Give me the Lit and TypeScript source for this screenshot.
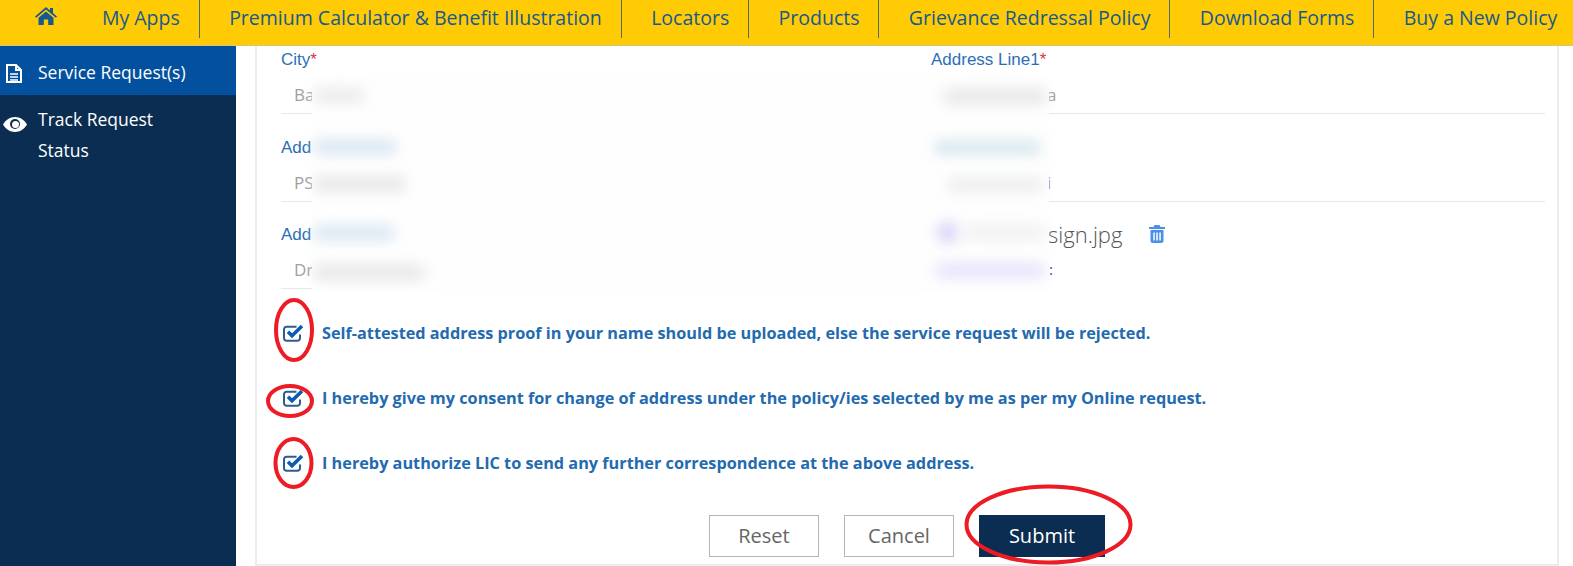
import { css, html, LitElement, svg } from 'lit';
import { customElement } from 'lit/decorators.js';

const NAV = ['My Apps', 'Premium Calculator & Benefit Illustration', 'Locators', 'Products', 'Grievance Redressal Policy', 'Download Forms', 'Buy a New Policy'];

const CHECKS = [
  'Self-attested address proof in your name should be uploaded, else the service request will be rejected.',
  'I hereby give my consent for change of address under the policy/ies selected by me as per my Online request.',
  'I hereby authorize LIC to send any further correspondence at the above address.',
];

// smudges inside the white redaction patch: x, y, w, h, colour (page coords)
const BLOBS: [number, number, number, number, string][] = [
  [314, 140, 82, 14, '#d6e5f2'],
  [314, 177, 92, 14, '#e6e6e6'],
  [314, 226, 80, 14, '#d6e5f2'],
  [314, 265, 110, 15, '#e6e6e6'],
  [314, 89, 50, 13, '#e8e8e8'],
  [944, 89, 102, 15, '#e6e6e6'],
  [935, 141, 105, 13, '#d2e5ec'],
  [948, 178, 94, 14, '#ececec'],
  [938, 223, 19, 19, '#d6d2f7'],
  [964, 225, 80, 15, '#f0f0f0'],
  [936, 264, 108, 13, '#e2dffa'],
];

// red hand-drawn annotation rings: cx, cy, rx, ry
const RINGS: [number, number, number, number][] = [
  [294, 330, 18, 30],
  [290, 401, 22, 15],
  [293.5, 463, 18, 24],
  [1048.5, 524.5, 82, 38],
];

@customElement('app-root')
export class AppRoot extends LitElement {
  static override styles = css`
    :host {
      display: block;
      position: relative;
      width: 1573px;
      height: 566px;
      overflow: hidden;
      background: #fff;
      font-family: 'Open Sans', sans-serif;
    }
    .topbar {
      display: flex;
      height: 45px;
      background: #ffcb05;
      border-bottom: 1px solid #d8c67a;
      color: #17598f;
      font-size: 19.5px;
    }
    .home {
      flex: none;
      width: 72.5px;
      padding: 7px 0 0 35px;
      box-sizing: border-box;
    }
    .home svg {
      display: block;
    }
    .nav-item {
      height: 38px;
      line-height: 35px;
      padding: 0 19px 0 29.4px;
      white-space: nowrap;
      border-right: 1px solid #4d6a70;
    }
    .nav-item:last-child {
      border-right: none;
      padding-right: 0;
    }
    .body {
      display: flex;
      height: 520px;
    }
    .sidebar {
      width: 236px;
      flex: none;
      background: #0b2d51;
      color: #fff;
      font-size: 17.5px;
    }
    .side-item {
      display: flex;
      line-height: 31px;
      padding-left: 38px;
      position: relative;
    }
    .side-item svg {
      position: absolute;
    }
    .side-item.active {
      background: #03519e;
      height: 46px;
      padding-top: 3px;
      align-items: center;
    }
    .side-item.track {
      padding-top: 9px;
    }
    .card {
      flex: 1;
      margin: 0 14px 0 19px;
      border: solid #ececec;
      border-width: 0 2px 2px;
      padding: 1px 0 0 24px;
    }
    .form-grid {
      display: grid;
      grid-template-columns: 650px 614px;
      grid-auto-rows: 87.5px;
    }
    .label {
      height: 26px;
      line-height: 26px;
      font-family: 'Liberation Sans', Arial, sans-serif;
      font-size: 17px;
      color: #2a6fb5;
    }
    .label i {
      color: #d9363e;
      font-style: normal;
    }
    .value {
      height: 40px;
      line-height: 44px;
      border-bottom: 1px solid #e8e8e8;
      font-size: 17px;
      color: #a0a0a0;
      padding-left: 13px;
    }
    .value.tail {
      padding-left: 116px;
    }
    .file {
      display: flex;
      align-items: center;
      height: 24px;
      padding-left: 117px;
      font-size: 22px;
      font-weight: 300;
      color: #555;
    }
    .file svg {
      margin-left: 27px;
    }
    .file-link {
      height: 42px;
      line-height: 46px;
      padding-left: 118px;
      font-size: 15px;
      color: #3b30d0;
    }
    .checks {
      display: flex;
      flex-direction: column;
      gap: 35px;
      margin-top: 8px;
    }
    .check {
      display: flex;
      align-items: center;
      gap: 18px;
      height: 30px;
      padding-left: 2px;
      font-size: 16.25px;
      font-weight: 700;
      color: #236aaf;
      white-space: nowrap;
    }
    .actions {
      display: flex;
      gap: 25px;
      margin-top: 37px;
      padding-left: 428px;
    }
    .btn {
      width: 110px;
      height: 42px;
      box-sizing: border-box;
      border: 1px solid #b5b5b5;
      background: #fff;
      color: #666;
      font: 20px 'Open Sans', sans-serif;
      padding: 0;
    }
    .btn.primary {
      width: 126px;
      background: #0b2d51;
      border-color: #0b2d51;
      color: #fff;
    }
    .patch {
      position: absolute;
      left: 312px;
      top: 73px;
      width: 737px;
      height: 218px;
      background: #fefefe;
    }
    .blob {
      position: absolute;
      filter: blur(7px);
      border-radius: 4px;
    }
    .rings {
      position: absolute;
      inset: 0;
      pointer-events: none;
    }
  `;

  private checkIcon() {
    return html`<svg width="21" height="18" viewBox="0 0 21 18" fill="none">
      <path d="M17 10.500v3.700a2.500 2.500 0 0 1-2.500 2.500H3.500A2.500 2.500 0 0 1 1 14.200V5.300A2.500 2.500 0 0 1 3.500 2.800h10" stroke="#2c5c90" stroke-width="2"/>
      <path d="M5 7.800l4 4L19 2" stroke="#0d5cb0" stroke-width="3.600"/>
    </svg>`;
  }

  override render() {
    return html`
      <div class="topbar">
        <div class="home">
          <svg width="22" height="18" viewBox="0 0 22 18" fill="#17598f">
            <path d="M11 0l4 3.400V1h3v5l4 3.400-1.200 1.400L11 2.600 1.200 10.800 0 9.400z"/>
            <path d="M3.500 10.800L11 4.500l7.500 6.300V18h-5.300v-5.500H8.800V18H3.500z"/>
          </svg>
        </div>
        ${NAV.map((n) => html`<div class="nav-item">${n}</div>`)}
      </div>
      <div class="body">
        <div class="sidebar">
          <div class="side-item active">
            <svg style="left:5px;top:18px" width="18" height="19" viewBox="0 0 18 19" fill="none" stroke="#fff" stroke-width="2">
              <path d="M2 1h9l5 5v12H2z"/><path d="M11 1v5h5"/><path d="M5 10h8M5 13h8M5 16h8" stroke-width="1.500"/>
            </svg>
            Service Request(s)
          </div>
          <div class="side-item track">
            <svg style="left:3px;top:22px" width="24" height="15" viewBox="0 0 24 15">
              <path d="M0 7.500C3 2.700 7 0 12 0s9 2.700 12 7.500C21 12.300 17 15 12 15S3 12.300 0 7.500z" fill="#fff"/>
              <circle cx="12" cy="7" r="5" fill="#0b2d51"/>
              <circle cx="12.500" cy="7.500" r="3.500" fill="#fff"/>
            </svg>
            <div>Track Request<br />Status</div>
          </div>
        </div>
        <div class="card">
          <div class="form-grid">
            <div>
              <div class="label">City<i>*</i></div>
              <div class="value">Ba</div>
            </div>
            <div>
              <div class="label">Address Line1<i>*</i></div>
              <div class="value tail">a</div>
            </div>
            <div>
              <div class="label">Add</div>
              <div class="value">PS</div>
            </div>
            <div>
              <div class="label"></div>
              <div class="value tail">i</div>
            </div>
            <div>
              <div class="label">Add</div>
              <div class="value">Dr</div>
            </div>
            <div>
              <div class="file">
                sign.jpg
                <svg width="16" height="18" viewBox="0 0 16 18" fill="#4a8fe8">
                  <path d="M5.500 0h5l1 2H16v2H0V2h4.500z"/>
                  <path fill-rule="evenodd" d="M1.500 5h13v10.500a2.500 2.500 0 0 1-2.500 2.500H4a2.500 2.500 0 0 1-2.500-2.500zM4.300 7.500v8h1.500v-8zm3 0v8h1.500v-8zm3 0v8h1.500v-8z"/>
                </svg>
              </div>
              <div class="file-link">:</div>
            </div>
          </div>
          <div class="checks">
            ${CHECKS.map((c) => html`<div class="check">${this.checkIcon()}<span>${c}</span></div>`)}
          </div>
          <div class="actions">
            <button class="btn">Reset</button>
            <button class="btn">Cancel</button>
            <button class="btn primary">Submit</button>
          </div>
        </div>
      </div>
      <div class="patch">
        ${BLOBS.map(
          ([x, y, w, h, c]) =>
            html`<div class="blob" style="left:${x - 312}px;top:${y - 73}px;width:${w}px;height:${h}px;background:${c}"></div>`,
        )}
      </div>
      <svg class="rings" width="1573" height="566" fill="none" stroke="#ed1c24" stroke-width="4">
        ${RINGS.map(([cx, cy, rx, ry]) => svg`<ellipse cx=${cx} cy=${cy} rx=${rx} ry=${ry} />`)}
      </svg>
    `;
  }
}
